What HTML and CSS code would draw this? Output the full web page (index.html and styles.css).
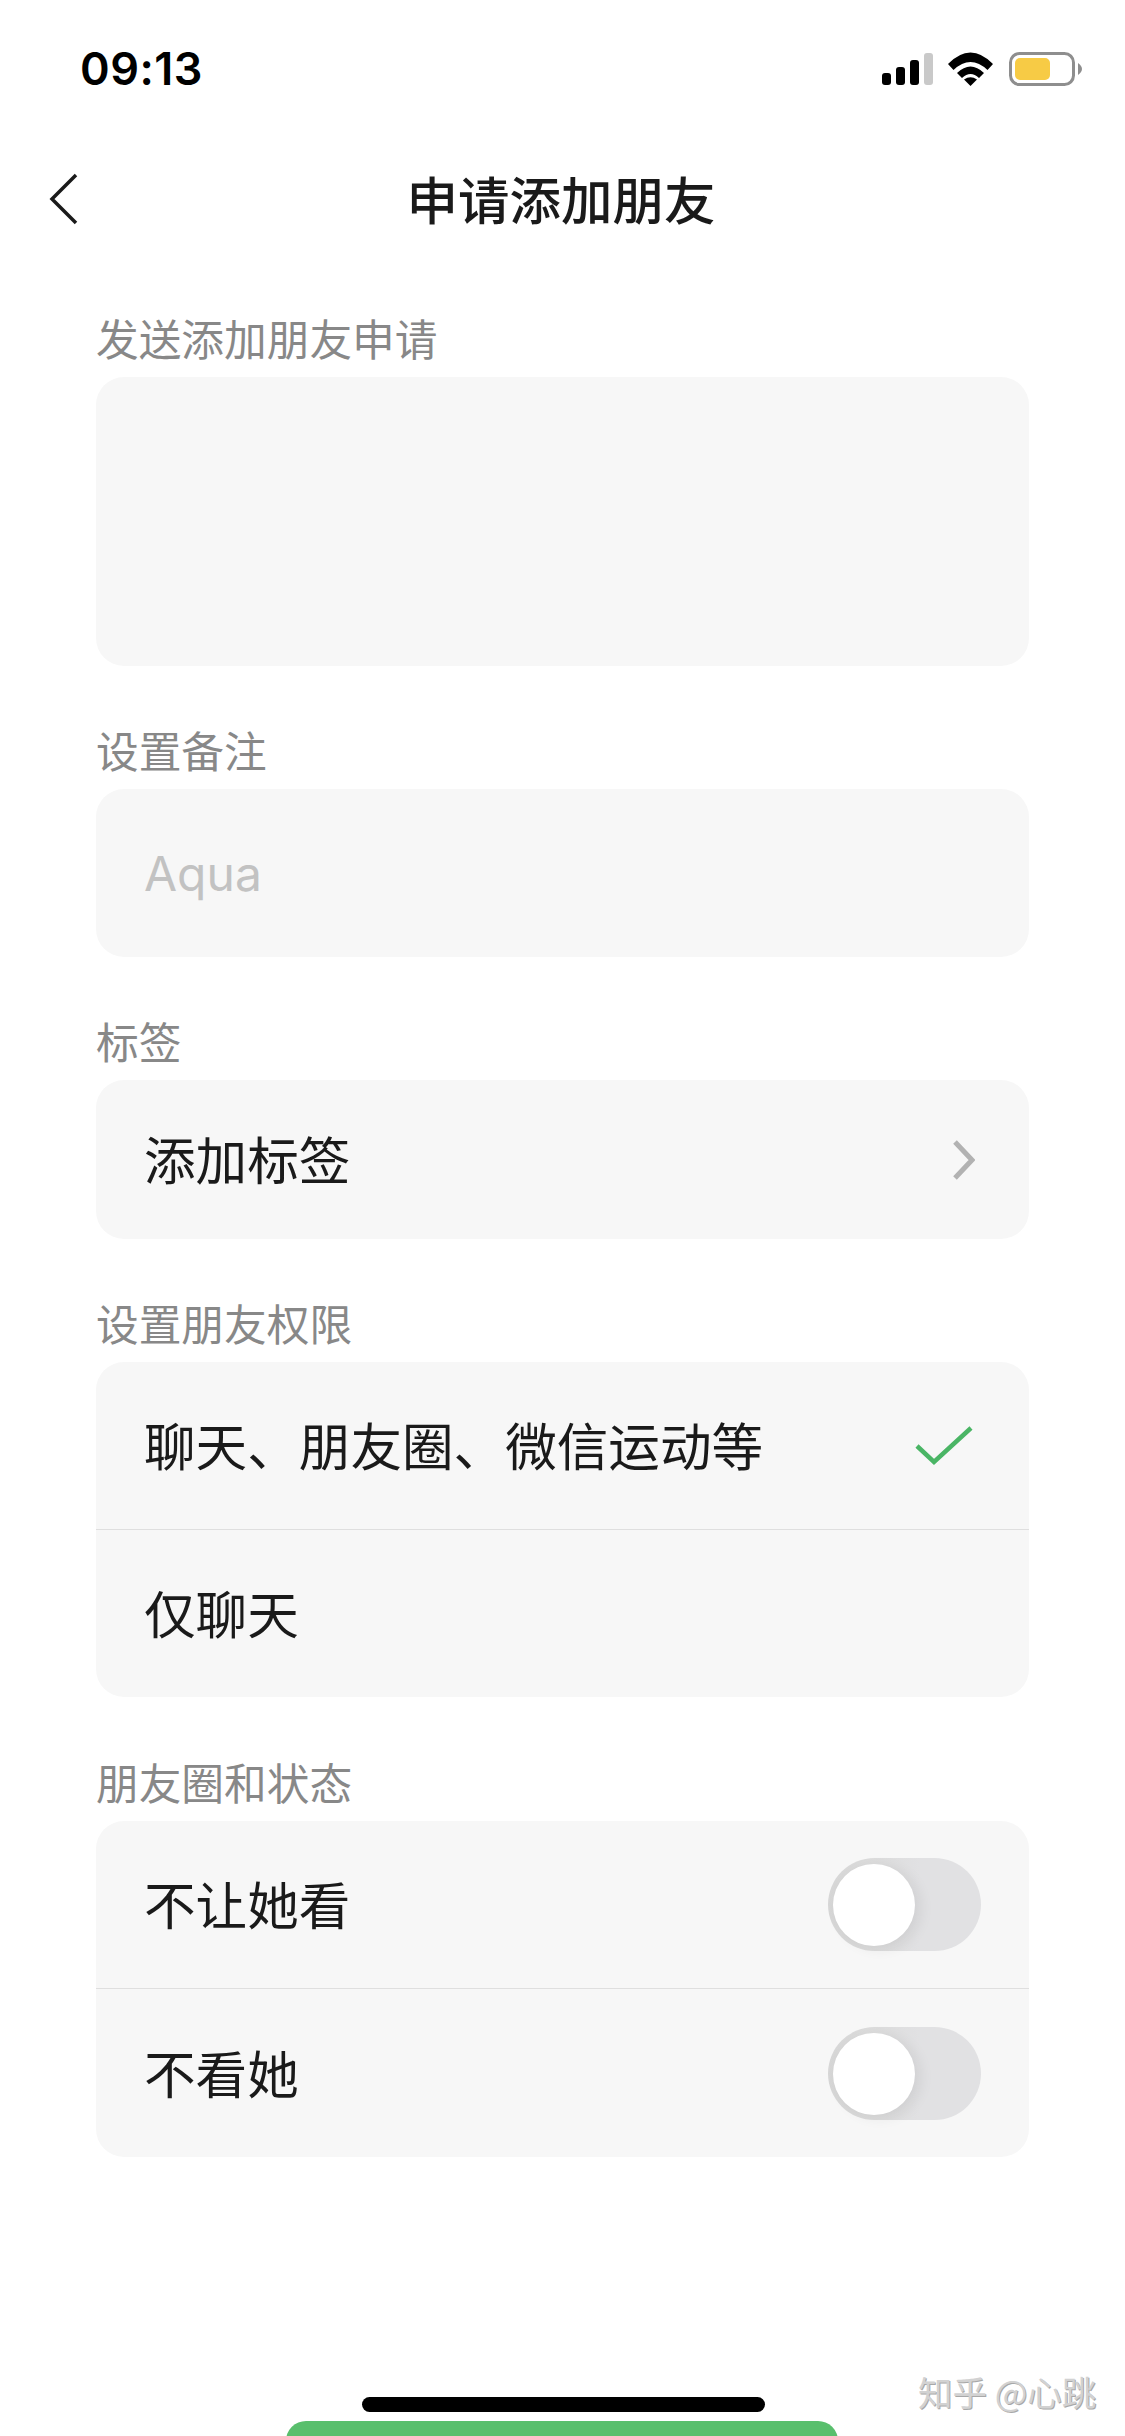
FILE: index.html
```html
<!DOCTYPE html>
<html lang="zh-CN">
<head>
<meta charset="utf-8">
<title>申请添加朋友</title>
<link rel="stylesheet" href="styles.css">
</head>
<body>
<div class="page">
  <header class="status">
    <span class="time">09:13</span>
    <svg class="status-icons" width="200" height="34" viewBox="0 0 200 34">
      <rect x="0" y="21" width="9" height="12" rx="3" fill="#000"/>
      <rect x="14" y="15" width="9" height="18" rx="3" fill="#000"/>
      <rect x="28" y="8" width="9" height="25" rx="3" fill="#000"/>
      <rect x="42" y="1" width="9" height="32" rx="3" fill="#c9c9c9"/>
      <path d="M66 12 Q88.500 -11 111 12 L105.500 18 Q88.500 2 71.500 18 Z" fill="#000"/>
      <path d="M75 21 Q88.500 8 102 21 L97 26 Q88.500 18 80 26 Z" fill="#000"/>
      <path d="M82 27.500 Q88.500 23 95 27.500 L88.500 34 Z" fill="#000"/>
      <rect x="128.500" y="1.500" width="63" height="31" rx="9" fill="#fff" stroke="#8e8e8e" stroke-width="3"/>
      <rect x="133" y="6" width="35" height="22" rx="5" fill="#f7cb45"/>
      <path d="M196 11 Q200 14 200 17 Q200 20 196 23 Z" fill="#8e8e8e"/>
    </svg>
  </header>

  <nav class="nav">
    <svg class="back" width="30" height="52" viewBox="0 0 30 52">
      <path d="M27 2 L3 26 L27 50" fill="none" stroke="#1a1a1a" stroke-width="3.500"/>
    </svg>
    <h1 class="title">申请添加朋友</h1>
  </nav>

  <main class="content">
    <section class="section">
      <div class="label">发送添加朋友申请</div>
      <div class="card card-message"></div>
    </section>

    <section class="section">
      <div class="label">设置备注</div>
      <div class="card">
        <div class="row row-placeholder">Aqua</div>
      </div>
    </section>

    <section class="section">
      <div class="label">标签</div>
      <div class="card">
        <div class="row row-short">
          <span>添加标签</span>
          <svg class="chevron" width="22" height="40" viewBox="0 0 22 40">
            <path d="M2 2 L19 20 L2 38" fill="none" stroke="#b2b2b2" stroke-width="5"/>
          </svg>
        </div>
      </div>
    </section>

    <section class="section">
      <div class="label">设置朋友权限</div>
      <div class="card">
        <div class="row">
          <span>聊天、朋友圈、微信运动等</span>
          <svg class="check" width="58" height="40" viewBox="0 0 58 40">
            <path d="M2 20 L19 36 L56 2" fill="none" stroke="#4ab565" stroke-width="4.500"/>
          </svg>
        </div>
        <div class="row row-divided"><span>仅聊天</span></div>
      </div>
    </section>

    <section class="section section-last">
      <div class="label">朋友圈和状态</div>
      <div class="card">
        <div class="row">
          <span>不让她看</span>
          <div class="toggle"><div class="knob"></div></div>
        </div>
        <div class="row row-divided row-end">
          <span>不看她</span>
          <div class="toggle"><div class="knob"></div></div>
        </div>
      </div>
    </section>
  </main>

  <div class="submit"></div>
  <div class="home-bar"></div>
  <div class="watermark">知乎 @心跳</div>
</div>
</body>
</html>
```

FILE: styles.css
```css
* { box-sizing: border-box; }
html, body { margin: 0; padding: 0; background: #fff; }
.page {
  position: relative;
  width: 1125px;
  height: 2436px;
  overflow: hidden;
  background: #fff;
  font-family: "Noto Sans CJK SC", "Noto Sans", sans-serif;
  color: #1a1a1a;
}
.status {
  display: flex;
  justify-content: space-between;
  align-items: flex-start;
  height: 134px;
  padding: 52px 43px 0 80px;
}
.time {
  font-family: Inter, "Liberation Sans", sans-serif;
  font-weight: 600;
  font-size: 45px;
  line-height: 34px;
  letter-spacing: 0.5px;
  color: #000;
}
.status-icons { display: block; }
.nav {
  position: relative;
  display: flex;
  align-items: center;
  justify-content: center;
  height: 128px;
  padding-right: 3px;
}
.back { position: absolute; left: 49px; top: 39px; }
.title {
  margin: 0;
  font-size: 51.500px;
  line-height: 70px;
  font-weight: 500;
  color: #1a1a1a;
}
.content {
  display: flex;
  flex-direction: column;
  gap: 47px;
  padding: 39px 96px 0;
}
.section-last { margin-top: 1px; }
.label {
  height: 76px;
  font-size: 42.700px;
  line-height: 72px;
  color: #888;
}
.card {
  background: #f7f7f7;
  border-radius: 28px;
  overflow: hidden;
}
.card-message { height: 289px; }
.row {
  display: flex;
  align-items: center;
  justify-content: space-between;
  height: 167px;
  padding: 0 48px;
  font-size: 51.600px;
  color: #1a1a1a;
}
.row span { margin-bottom: 4px; }
.row-short { height: 159px; padding-right: 54px; }
.row-placeholder {
  height: 168px;
  color: #c2c2c2;
  font-family: Inter, "Noto Sans", sans-serif;
  font-weight: 400;
  font-size: 48px;
}
.row-divided { height: 168px; border-top: 1.500px solid #dfdfdf; }
.row-end { height: 169px; }
.check { margin-right: 8px; }
.toggle {
  position: relative;
  width: 153px;
  height: 93px;
  border-radius: 47px;
  background: linear-gradient(90deg, #d6d6d6 0%, #dcdcdc 30%, #e1e1e3 60%);
}
.knob {
  position: absolute;
  left: 5px;
  top: 6px;
  width: 82px;
  height: 82px;
  border-radius: 50%;
  background: #fff;
  box-shadow: 6px 3px 14px rgba(0, 0, 0, 0.07);
}
.submit {
  width: 552px;
  height: 100px;
  margin: 264px 0 0 286px;
  background: #59bf6d;
  border-radius: 20px;
}
.home-bar {
  position: absolute;
  left: 362px;
  top: 2397px;
  width: 403px;
  height: 15px;
  border-radius: 8px;
  background: #000;
}
.watermark {
  position: absolute;
  left: 918px;
  top: 2369px;
  font-size: 34.500px;
  line-height: 44px;
  color: #d2d2d2;
  text-shadow: 1px 1px 0 #a8a8a8;
  white-space: nowrap;
}
```
